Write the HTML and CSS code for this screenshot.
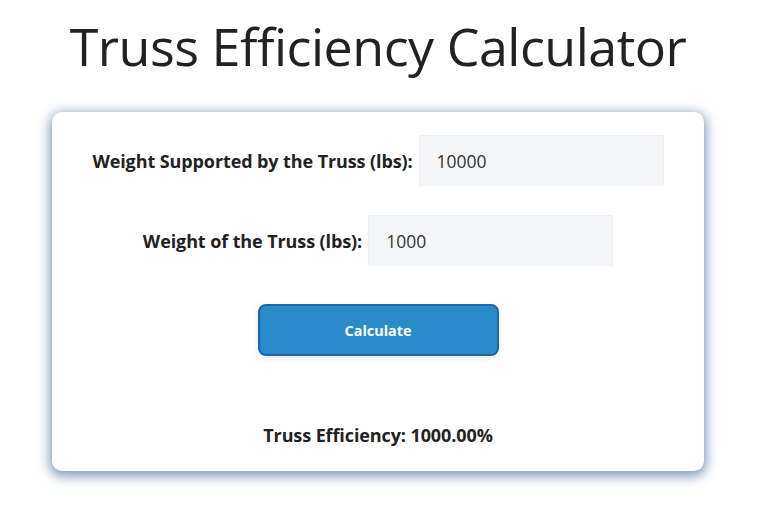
FILE: index.html
```html
<!DOCTYPE html>
<html lang="en">
<head>
<meta charset="utf-8">
<title>Truss Efficiency Calculator</title>
<link rel="stylesheet" href="styles.css">
</head>
<body>
<h1 class="title">Truss Efficiency Calculator</h1>
<main class="card">
  <div class="row">
    <label class="label" for="supported">Weight Supported by the Truss (lbs):</label>
    <input class="field" id="supported" type="text" value="10000">
  </div>
  <div class="row">
    <label class="label" for="own">Weight of the Truss (lbs):</label>
    <input class="field" id="own" type="text" value="1000">
  </div>
  <div class="actions">
    <button class="btn" type="button">Calculate</button>
  </div>
  <p class="result">Truss Efficiency: 1000.00%</p>
</main>
</body>
</html>
```
FILE: styles.css
```css
* { box-sizing: border-box; }

body {
  margin: 0;
  padding: 0 12px 40px 0;
  background: #fff;
  font-family: "Open Sans", "Noto Sans", sans-serif;
  color: #222;
}

.title {
  margin: 0;
  padding-top: 13px;
  text-align: center;
  font-weight: 400;
  font-size: 52px;
  line-height: 66px;
  color: #222;
  letter-spacing: -0.5px;
}

.card {
  width: 652px;
  margin: 33px auto 0;
  padding: 23px 0 24px;
  background: #fff;
  border-radius: 10px;
  box-shadow: 0 3px 12px 2px rgba(40, 80, 135, 0.6);
  display: flex;
  flex-direction: column;
  align-items: center;
}

.row {
  display: flex;
  align-items: center;
  gap: 6px;
  margin-bottom: 29px;
}

.label {
  font-weight: 700;
  font-size: 18px;
  letter-spacing: -0.1px;
  color: #222;
}

.field {
  width: 245px;
  height: 51px;
  padding: 0 17px;
  border: 1px solid #f0f1f3;
  background: #f5f6f8;
  font-family: inherit;
  font-size: 17.5px;
  color: #333;
  outline: none;
}

.actions {
  margin-top: 9px;
}

.btn {
  width: 241px;
  height: 52px;
  border: 2px solid #1f66a8;
  border-radius: 8px;
  background: #2a8bcb;
  color: #fff;
  font-family: inherit;
  font-weight: 700;
  font-size: 14.4px;
  box-shadow: 0 2px 6px rgba(60, 100, 150, 0.15);
}

.result {
  margin: 67px 0 0;
  font-weight: 700;
  font-size: 18px;
  line-height: 24px;
  letter-spacing: -0.1px;
}
```
